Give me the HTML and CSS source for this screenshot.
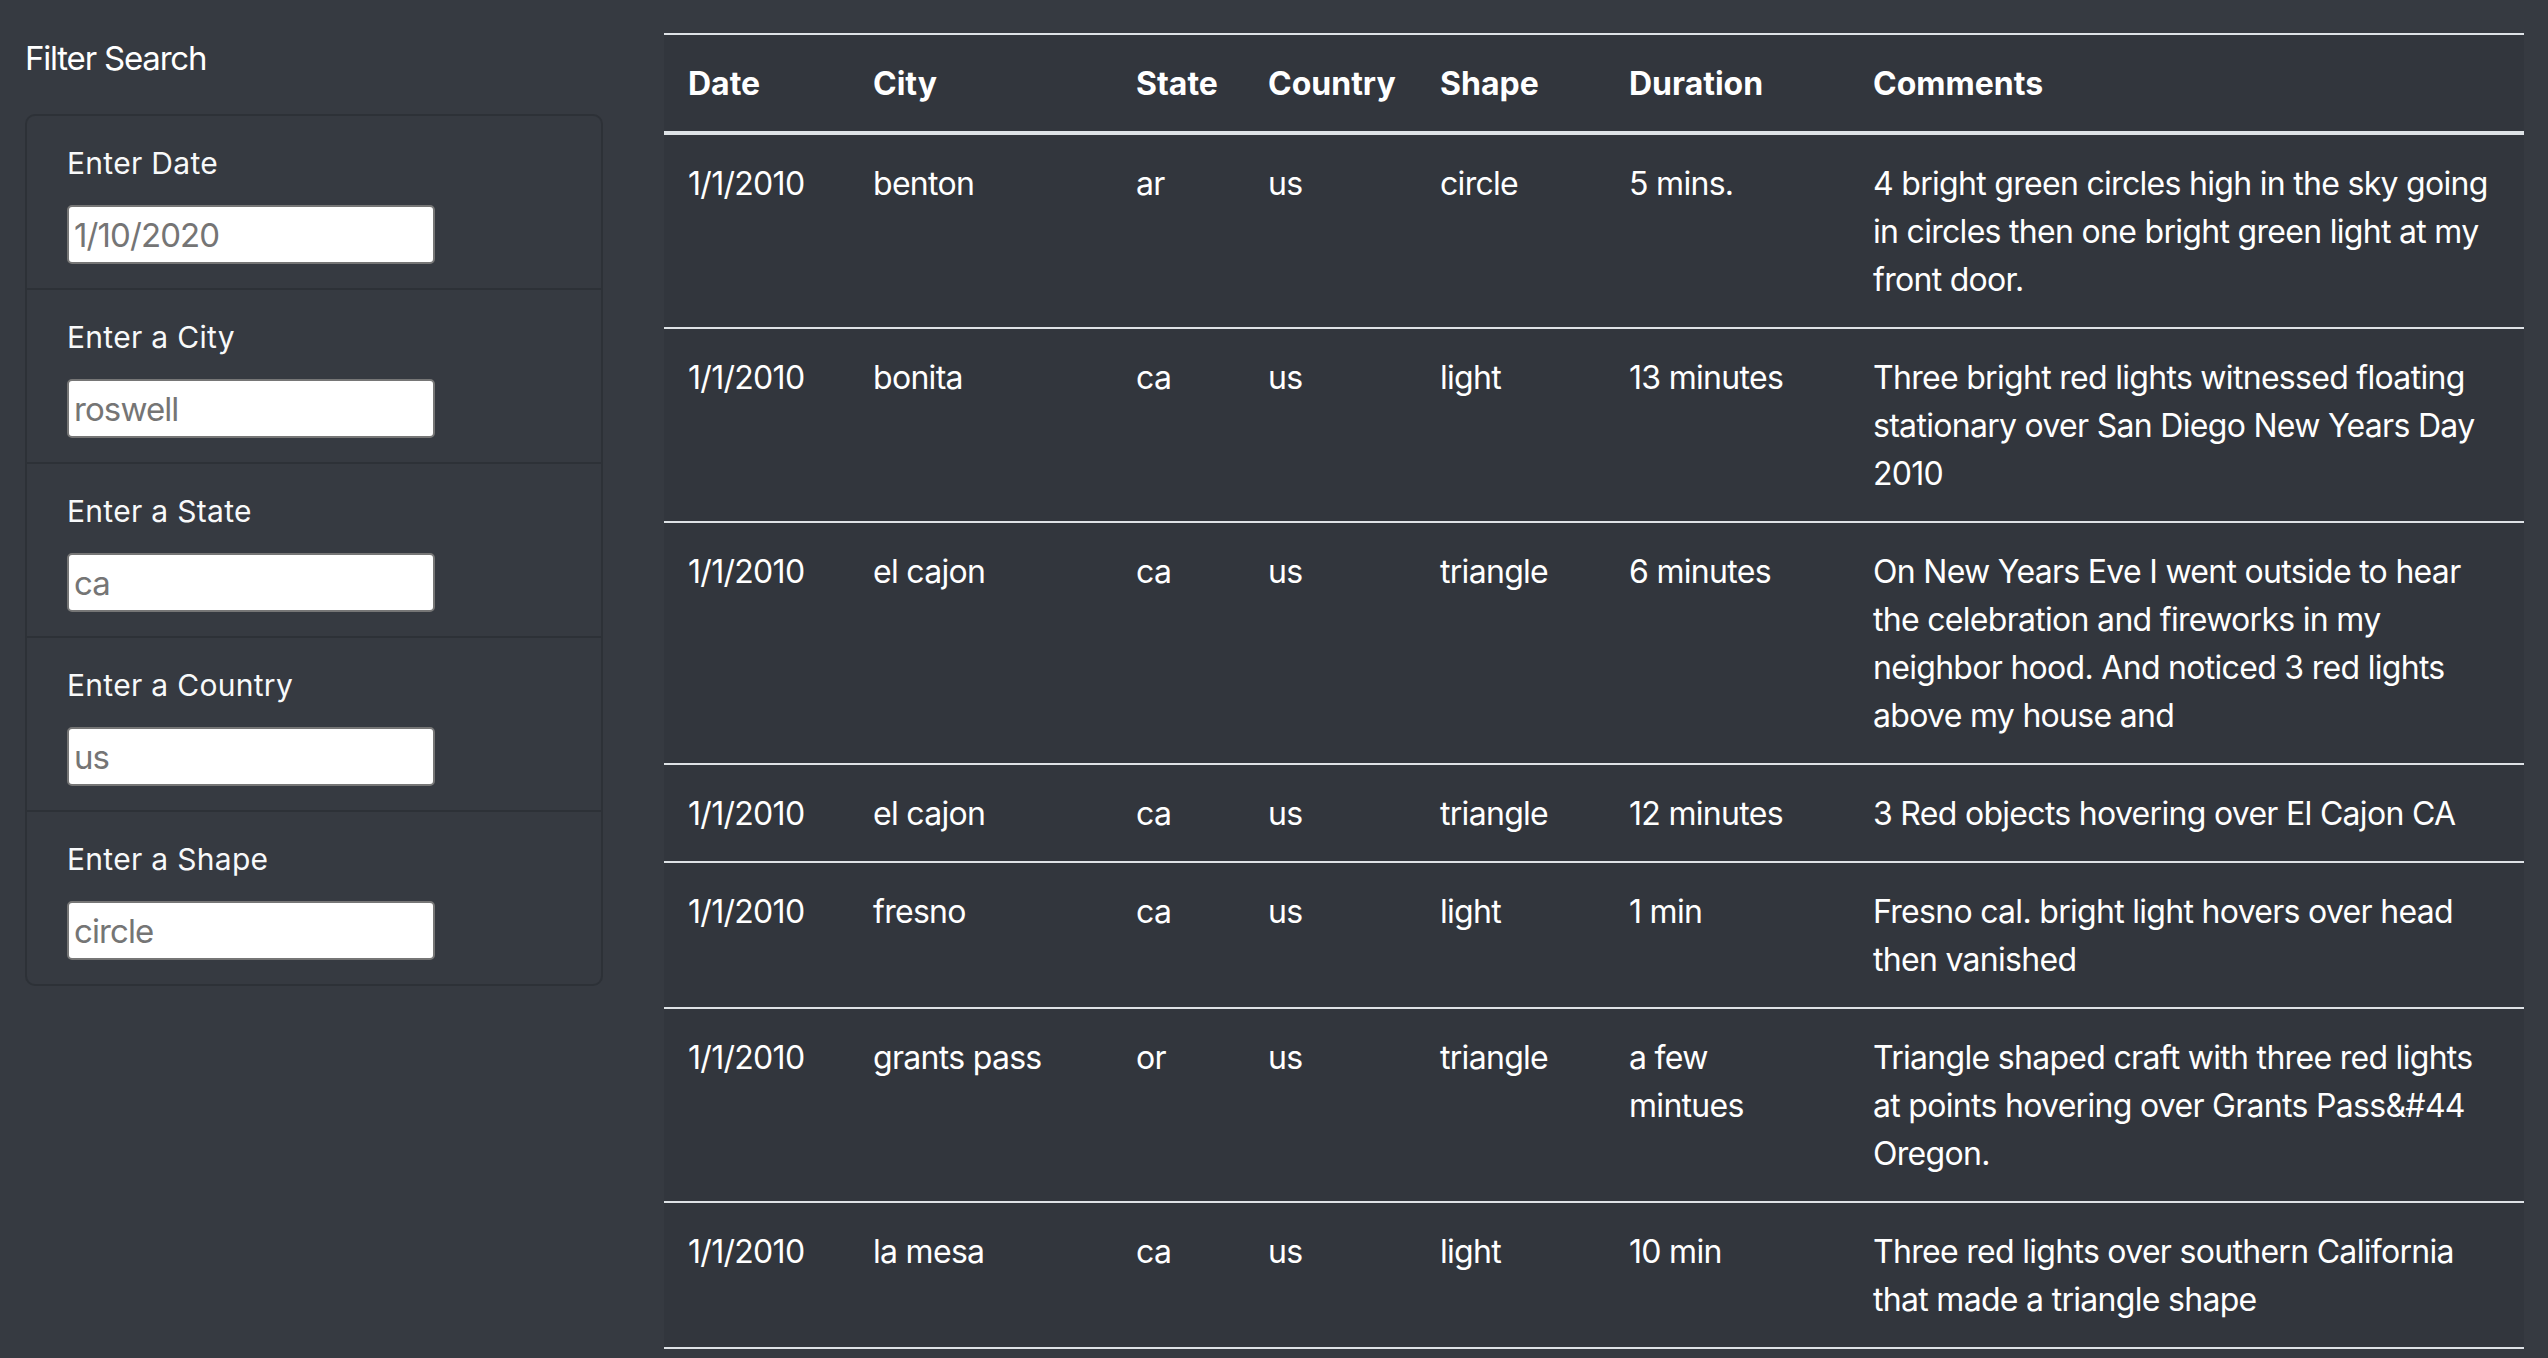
FILE: index.html
```html
<!DOCTYPE html>
<html lang="en">
<head>
<meta charset="utf-8">
<title>UFO Sightings</title>
<link rel="stylesheet" href="styles.css">
</head>
<body>
<div class="page">
  <aside class="sidebar">
    <div class="filter-title">Filter Search</div>
    <ul class="filter-card">
      <li class="filter-item">
        <label class="filter-label" for="datetime">Enter Date</label>
        <input class="filter-input" id="datetime" type="text" placeholder="1/10/2020">
      </li>
      <li class="filter-item">
        <label class="filter-label" for="city">Enter a City</label>
        <input class="filter-input" id="city" type="text" placeholder="roswell">
      </li>
      <li class="filter-item">
        <label class="filter-label" for="state">Enter a State</label>
        <input class="filter-input" id="state" type="text" placeholder="ca">
      </li>
      <li class="filter-item">
        <label class="filter-label" for="country">Enter a Country</label>
        <input class="filter-input" id="country" type="text" placeholder="us">
      </li>
      <li class="filter-item">
        <label class="filter-label" for="shape">Enter a Shape</label>
        <input class="filter-input" id="shape" type="text" placeholder="circle">
      </li>
    </ul>
  </aside>
  <main class="main">
    <table class="ufo-table">
      <colgroup>
        <col class="c-date"><col class="c-city"><col class="c-state"><col class="c-country"><col class="c-shape"><col class="c-duration"><col class="c-comments">
      </colgroup>
      <thead>
        <tr><th>Date</th><th>City</th><th>State</th><th>Country</th><th>Shape</th><th>Duration</th><th>Comments</th></tr>
      </thead>
      <tbody>
        <tr><td>1/1/2010</td><td>benton</td><td>ar</td><td>us</td><td>circle</td><td>5 mins.</td><td>4 bright green circles high in the sky going in circles then one bright green light at my front door.</td></tr>
        <tr><td>1/1/2010</td><td>bonita</td><td>ca</td><td>us</td><td>light</td><td>13 minutes</td><td>Three bright red lights witnessed floating stationary over San Diego New Years Day 2010</td></tr>
        <tr><td>1/1/2010</td><td>el cajon</td><td>ca</td><td>us</td><td>triangle</td><td>6 minutes</td><td>On New Years Eve I went outside to hear the celebration and fireworks in my neighbor hood. And noticed 3 red lights above my house and</td></tr>
        <tr><td>1/1/2010</td><td>el cajon</td><td>ca</td><td>us</td><td>triangle</td><td>12 minutes</td><td>3 Red objects hovering over El Cajon CA</td></tr>
        <tr><td>1/1/2010</td><td>fresno</td><td>ca</td><td>us</td><td>light</td><td>1 min</td><td>Fresno cal. bright light hovers over head then vanished</td></tr>
        <tr><td>1/1/2010</td><td>grants pass</td><td>or</td><td>us</td><td>triangle</td><td>a few mintues</td><td>Triangle shaped craft with three red lights at points hovering over Grants Pass&amp;#44 Oregon.</td></tr>
        <tr><td>1/1/2010</td><td>la mesa</td><td>ca</td><td>us</td><td>light</td><td>10 min</td><td>Three red lights over southern California that made a triangle shape</td></tr>
      </tbody>
    </table>
  </main>
</div>
</body>
</html>
```

FILE: styles.css
```css
html, body {
  margin: 0;
  padding: 0;
  height: 100%;
  overflow: hidden;
}

body {
  background: #363a41;
  color: #ffffff;
  font-family: Inter, "Noto Sans", "Liberation Sans", sans-serif;
  font-size: 32px;
  line-height: 48px;
}

.page {
  display: flex;
  align-items: flex-start;
  gap: 61px;
  padding: 0 24px 0 25px;
}

.sidebar {
  width: 578px;
  flex: 0 0 578px;
  padding-top: 34px;
}

.filter-title {
  font-size: 33px;
  line-height: 48px;
  letter-spacing: -1.2px;
  color: #ffffff;
}

.filter-card {
  list-style: none;
  margin: 32px 0 0 0;
  padding: 0;
  border: 2px solid #2d3137;
  border-radius: 10px;
}

.filter-item {
  display: flex;
  flex-direction: column;
  align-items: flex-start;
  padding: 24px 40px 24px;
  border-bottom: 2px solid #2d3137;
}

.filter-item:last-child {
  border-bottom: none;
}

.filter-label {
  font-size: 30px;
  line-height: 46px;
  letter-spacing: 0.3px;
  margin-bottom: 19px;
  color: #f8f9fa;
}

.filter-input {
  box-sizing: border-box;
  width: 368px;
  height: 59px;
  margin: 0;
  padding: 2px 5px;
  border: 2px solid #767676;
  border-radius: 5px;
  background: #ffffff;
  font-family: Inter, "Noto Sans", "Liberation Sans", sans-serif;
  font-size: 33px;
  letter-spacing: -0.9px;
  color: #333333;
  outline: none;
}

.filter-input::placeholder {
  color: #757575;
  opacity: 1;
}

.main {
  flex: 1 1 auto;
  padding-top: 33px;
}

.ufo-table {
  width: 1860px;
  table-layout: fixed;
  border-collapse: collapse;
  background: #32363d;
  color: #ffffff;
}

.c-date { width: 185px; }
.c-city { width: 263px; }
.c-state { width: 132px; }
.c-country { width: 172px; }
.c-shape { width: 189px; }
.c-duration { width: 244px; }
.c-comments { width: 675px; }

.ufo-table th,
.ufo-table td {
  padding: 25px 24px 23px;
  text-align: left;
  vertical-align: top;
  border-top: 2px solid #dee2e6;
  font-size: 32px;
  line-height: 48px;
}

.ufo-table th {
  font-weight: 700;
  border-bottom: 4px solid #dee2e6;
}

.ufo-table td {
  font-weight: 400;
  letter-spacing: -0.7px;
}

.ufo-table tbody tr:last-child td {
  border-bottom: 2px solid #dee2e6;
}
```
